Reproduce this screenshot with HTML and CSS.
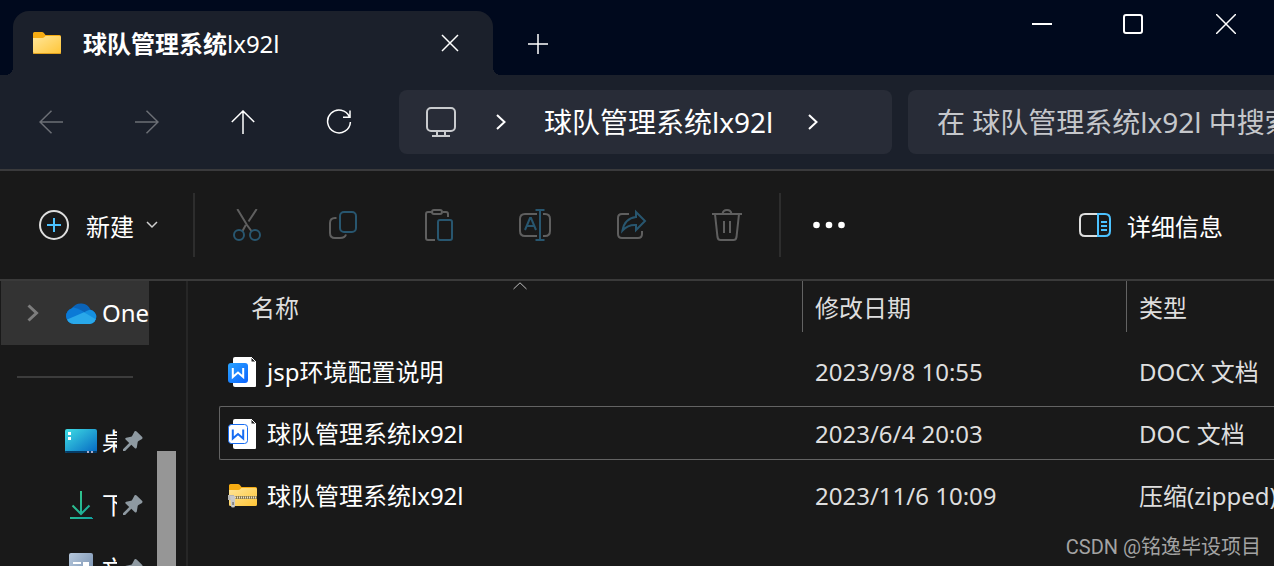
FILE: index.html
```html
<!DOCTYPE html>
<html lang="zh-CN">
<head>
<meta charset="utf-8">
<title>球队管理系统lx92l</title>
<link rel="stylesheet" href="styles.css">
</head>
<body>
<svg class="defs" width="0" height="0" aria-hidden="true">
  <defs>
    <linearGradient id="gFolder" x1="0" y1="0" x2="1" y2="1"><stop offset="0" stop-color="#ffe69a"/><stop offset="1" stop-color="#ffc536"/></linearGradient>
    <linearGradient id="gDesk" x1="0" y1="0" x2="1" y2="1"><stop offset="0" stop-color="#3fdde4"/><stop offset="1" stop-color="#0567c2"/></linearGradient>
    <linearGradient id="gDown" x1="0" y1="0" x2="1" y2="1"><stop offset="0" stop-color="#3ccf86"/><stop offset="1" stop-color="#11a3a0"/></linearGradient>
    <linearGradient id="gDoc" x1="0" y1="0" x2="1" y2="1"><stop offset="0" stop-color="#b6c8dc"/><stop offset="1" stop-color="#6c86a8"/></linearGradient>
    <linearGradient id="gWps" x1="0" y1="0" x2="1" y2="1"><stop offset="0" stop-color="#2ba4ff"/><stop offset="1" stop-color="#0a63ff"/></linearGradient>
    <clipPath id="cloud"><path d="M8.500 21A8 8 0 0 1 7 5.300 10.500 10.500 0 0 1 25.500 6.800 7.200 7.200 0 0 1 25 21z"/></clipPath>
    <symbol id="pin" viewBox="0 0 22 22"><path d="M12.500 1.400c.7-.6 1.500-.5 2.100.1l5.400 5.200c.7.7.7 1.600 0 2.200l-3.500 2.100c-.5.3-.7.6-.8 1.100l-.9 5.500c-.2 1-1.200 1.300-1.900.6l-3.600-3.500-6.200 6.200H1v-1.700l6.200-6.100-3.600-3.500c-.7-.7-.3-1.700.6-1.900l4.800-.9c.5-.1.9-.4 1.100-.9z" fill="#8e99a1"/></symbol>
  </defs>
</svg>
<div class="window">
  <header class="titlebar">
    <div class="tab">
      <svg width="28" height="22" viewBox="0 0 28 22" aria-hidden="true"><path d="M0 1.500Q0 0 1.500 0H9q1 0 1.700.8L12.500 3H26.500Q28 3 28 4.500V12H0z" fill="#f7ac12"/><path d="M0 6H9.500q1 0 1.700-.8L12.500 4H26.500Q28 4 28 5.500V20.500Q28 22 26.500 22H1.500Q0 22 0 20.500z" fill="url(#gFolder)"/><path d="M0 20.500Q0 22 1.500 22H26.500Q28 22 28 20.500v-.3q-.4.8-1.500.8H1.500Q.4 21 0 20.200z" fill="#e0a01e"/></svg>
      <span class="tab-title"><b>球队管理系统</b>lx92l</span>
      <button class="tab-close" aria-label="关闭标签页"><svg width="18" height="18" viewBox="0 0 18 18"><path d="M1 1l16 16M17 1L1 17" stroke="#fff" stroke-width="1.500" fill="none"/></svg></button>
    </div>
    <button class="tab-add" aria-label="新建标签页"><svg width="20" height="20" viewBox="0 0 20 20"><path d="M10 0v20M0 10h20" stroke="#fff" stroke-width="1.500"/></svg></button>
    <div class="controls">
      <button aria-label="最小化"><svg width="20" height="20" viewBox="0 0 20 20"><path d="M0 10h20" stroke="#fff" stroke-width="2"/></svg></button>
      <button aria-label="最大化"><svg width="20" height="20" viewBox="0 0 20 20"><rect x="1" y="1" width="18" height="18" rx="2" stroke="#fff" stroke-width="2" fill="none"/></svg></button>
      <button aria-label="关闭"><svg width="20" height="20" viewBox="0 0 20 20"><path d="M0 0l20 20M20 0L0 20" stroke="#fff" stroke-width="1.500"/></svg></button>
    </div>
  </header>

  <div class="navbar">
    <div class="history">
      <button aria-label="后退" disabled><svg width="24" height="24" viewBox="0 0 24 24" stroke="#6c6f76"><path d="M24 12H1M12.500.8L1 12l11.500 11.200"/></svg></button>
      <button aria-label="前进" disabled><svg width="24" height="24" viewBox="0 0 24 24" stroke="#6c6f76"><path d="M0 12h23M11.500.8L23 12 11.500 23.200"/></svg></button>
      <button aria-label="向上"><svg width="24" height="24" viewBox="0 0 24 24" stroke="#fff"><path d="M12 24V1M.8 12L12 1l11.200 11"/></svg></button>
      <button aria-label="刷新"><svg width="26" height="26" viewBox="0 0 26 26" stroke="#fff"><path d="M23.500 8A11.400 11.400 0 1 0 24.400 13M24 1.500V8.300H17"/></svg></button>
    </div>
    <nav class="address" aria-label="地址">
      <button class="pc" aria-label="此电脑"><svg width="30" height="30" viewBox="0 0 30 30" fill="none" stroke="#c9cbce" stroke-width="2"><rect x="1" y="1" width="28" height="23" rx="4"/><path d="M11 24v4M19 24v4M6 29h18"/></svg></button>
      <svg class="chev" width="10" height="16" viewBox="0 0 10 16"><path d="M1 1l7.500 7L1 15"/></svg>
      <button class="crumb">球队管理系统lx92l</button>
      <svg class="chev" width="10" height="16" viewBox="0 0 10 16"><path d="M1 1l7.500 7L1 15"/></svg>
    </nav>
    <input class="search" type="text" aria-label="搜索" placeholder="在 球队管理系统lx92l 中搜索">
  </div>

  <div class="toolbar">
    <button class="new"><svg width="30" height="30" viewBox="0 0 30 30" fill="none" stroke-width="2"><circle cx="15" cy="15" r="14" stroke="#dedede"/><path d="M15 8v14M8 15h14" stroke="#4cc2ff"/></svg><span>新建</span><svg width="12" height="8" viewBox="0 0 12 8" fill="none" stroke="#cfcfcf" stroke-width="1.500"><path d="M1 1l5 5 5-5"/></svg></button>
    <span class="rule"></span>
    <div class="tools">
      <button aria-label="剪切" disabled><svg viewBox="0 0 32 32"><path class="g" d="M6.300 0l9.700 16 4.800 6.500M25.700 0L17.500 12.500M14.800 16L11.200 22.500"/><g class="b"><circle cx="8" cy="26" r="5"/><circle cx="24" cy="26" r="5"/></g></svg></button>
      <button aria-label="复制" disabled><svg viewBox="0 0 32 32"><path class="g" d="M9.500 9H8Q3 9 3 14V24Q3 29 8 29H13Q18 29 19 25.500"/><rect class="b" x="13" y="3" width="16" height="20" rx="4"/></svg></button>
      <button aria-label="粘贴" disabled><svg viewBox="0 0 32 32"><path class="g" d="M12 31H5Q3 31 3 29V5Q3 3 5 3H9M20 3H23Q25 3 25 5V8"/><rect class="g" x="9" y="1" width="10" height="4" rx="2"/><rect class="b" x="15" y="11" width="14" height="20" rx="2"/></svg></button>
      <button aria-label="重命名" disabled><svg viewBox="0 0 32 32"><path class="g" d="M18 5H6Q1 5 1 10V22Q1 27 6 27H18M24 5H26Q31 5 31 10V22Q31 27 26 27H24"/><path class="b" d="M6 21l5-12h1l5 12M7.500 17h8M21 1V31M16.500 1H25.500M16.500 31H25.500"/></svg></button>
      <button aria-label="共享" disabled><svg viewBox="0 0 32 32"><path class="g" d="M14 5H7Q3 5 3 9V25Q3 29 7 29H23Q27 29 27 25V22"/><path class="b" d="M21 3l9 9-9 9V16Q13 15.500 7.500 21.500 9.500 9.500 21 8z"/></svg></button>
      <button aria-label="删除" disabled><svg viewBox="0 0 32 32"><path class="g" d="M1 5H31M11.500 5Q12 1 16 1T20.500 5M4 5L6.500 28Q7 31 9.500 31H22.500Q25 31 25.500 28L28 5M13 12V24M19 12V24"/></svg></button>
    </div>
    <span class="rule"></span>
    <button class="more" aria-label="查看更多"><svg width="32" height="8" viewBox="0 0 32 8" fill="#fff"><circle cx="3.500" cy="4" r="3.300"/><circle cx="16" cy="4" r="3.300"/><circle cx="28.500" cy="4" r="3.300"/></svg></button>
    <button class="details"><svg width="32" height="24" viewBox="0 0 32 24" fill="none" stroke-width="2"><path d="M19 1H6Q1 1 1 6V18Q1 23 6 23H19" stroke="#dedede"/><path d="M19 1H26Q31 1 31 6V18Q31 23 26 23H19zM22 9h6M22 13h6M22 17h6" stroke="#4cc2ff"/></svg><span>详细信息</span></button>
  </div>

  <div class="content">
    <aside class="sidebar">
      <ul class="tree">
        <li class="node selected">
          <svg class="expand" width="12" height="18" viewBox="0 0 12 18" fill="none" stroke="#7d7d7d" stroke-width="3"><path d="M1.500 1.500L9.500 9l-8 7.500"/></svg>
          <svg class="node-icon" width="32" height="21" viewBox="0 0 32 21"><g clip-path="url(#cloud)"><path d="M0 0H32V21H0z" fill="#0a63b8"/><path d="M0 4Q10 3 20 9.500L6 21H0z" fill="#0b7ad6"/><path d="M19 9.500Q24 5.500 32 6V21z" fill="#1590e0"/><path d="M0 17.500L19 9.300 32 17V21H0z" fill="#29a8ea"/></g></svg>
          <span class="node-name">OneDrive</span>
        </li>
        <li class="separator"></li>
        <li class="node">
          <svg class="node-icon" width="32" height="24" viewBox="0 0 32 24"><rect width="32" height="24" rx="2" fill="url(#gDesk)"/><path d="M0 22H32Q32 24 30 24H2Q0 24 0 22z" fill="#063c67"/><path d="M3 3h3v3H3zM3 8h3v3H3z" fill="#fff"/><path d="M22 22h2v2h-2zM26 22h2v2h-2z" fill="#aac"/></svg>
          <span class="node-name pinned">桌面</span><svg class="pin"><use href="#pin"/></svg>
        </li>
        <li class="node">
          <svg class="node-icon" width="32" height="28" viewBox="0 0 32 28" fill="none" stroke="url(#gDown)" stroke-width="2"><path d="M16 0V23M7.500 14.500L16 23l8.500-8.500M5 27H27V26.900"/></svg>
          <span class="node-name pinned">下载</span><svg class="pin"><use href="#pin"/></svg>
        </li>
        <li class="node">
          <svg class="node-icon" width="32" height="32" viewBox="0 0 32 32"><rect x="4" width="24" height="32" rx="2" fill="url(#gDoc)"/><path d="M8 9h8v2H8zM8 14h8v2H8zM18 9h6v7h-6zM8 19h16v2H8z" fill="#fff"/></svg>
          <span class="node-name pinned">文档</span><svg class="pin"><use href="#pin"/></svg>
        </li>
      </ul>
      <div class="scroll"><div class="thumb"></div></div>
    </aside>
    <main class="files">
      <table>
        <colgroup><col class="c-name"><col class="c-date"><col></colgroup>
        <thead>
          <tr>
            <th><div class="head">名称</div><svg class="sort" width="14" height="8" viewBox="0 0 14 8" fill="none" stroke="#bdbdbd"><path d="M.5 7L7 .8 13.500 7"/></svg></th>
            <th><div class="head divided">修改日期</div></th>
            <th><div class="head divided">类型</div></th>
          </tr>
        </thead>
        <tbody>
          <tr>
            <td><div class="file"><svg width="30" height="32" viewBox="0 0 30 32"><path d="M7 1H23L28 6V30Q28 31 27 31H7Q5 31 5 29V3Q5 1 7 1z" fill="#fff"/><path d="M23 1V6H28z" fill="#222" stroke="#fff"/><rect y="7" width="20" height="20" rx="3" fill="url(#gWps)"/><path d="M4.800 12V21L10 16.500 15.200 21V12" fill="none" stroke="#fff" stroke-width="2"/></svg><span>jsp环境配置说明</span></div></td>
            <td>2023/9/8 10:55</td>
            <td>DOCX 文档</td>
          </tr>
          <tr class="focused">
            <td><div class="file"><svg width="30" height="32" viewBox="0 0 30 32"><path d="M7 1H23L28 6V30Q28 31 27 31H7Q5 31 5 29V3Q5 1 7 1z" fill="#fff"/><path d="M23 1V6H28z" fill="#222" stroke="#fff"/><rect x=".5" y="6.500" width="19" height="19" rx="3" fill="#fff" stroke="#176cf2"/><path d="M4.800 11.500V20.500L10 16 15.200 20.500V11.500" fill="none" stroke="#176cf2" stroke-width="2"/></svg><span>球队管理系统lx92l</span></div></td>
            <td>2023/6/4 20:03</td>
            <td>DOC 文档</td>
          </tr>
          <tr>
            <td><div class="file"><svg width="30" height="24" viewBox="0 0 30 24"><path d="M1 1.500Q1 0 2.500 0H10q1 0 1.700.8L13.500 3H27.500Q29 3 29 4.500V12H1z" fill="#f7ac12"/><path d="M1 6H10.500q1 0 1.700-.8L13.500 4H27.500Q29 4 29 5.500V20.500Q29 22 27.500 22H2.500Q1 22 1 20.500z" fill="url(#gFolder)"/><path d="M7 13.500H29" stroke="#8d7a48" stroke-width="3"/><path d="M7 13.500H29" stroke="#e8e0c8" stroke-width="2" stroke-dasharray="1 1"/><path d="M0 11h6v5H0z" fill="#b5b5b5"/><path d="M2 12h5v10Q7 23.500 5 23.500T3 22z" fill="#c9c9c9"/><path d="M4.300 18h1.500v3H4.300z" fill="#777"/></svg><span>球队管理系统lx92l</span></div></td>
            <td>2023/11/6 10:09</td>
            <td>压缩(zipped)</td>
          </tr>
        </tbody>
      </table>
    </main>
  </div>
  <div class="watermark">CSDN @铭逸毕设项目</div>
</div>
</body>
</html>
```
FILE: styles.css
```css
* { box-sizing: border-box; }
body {
  margin: 0;
  background: #191919;
  color: #fff;
  font-family: "Noto Sans", "Noto Sans CJK SC", sans-serif;
  font-size: 24px;
  line-height: 32px;
}
button, input { font: inherit; color: inherit; background: none; border: 0; padding: 0; margin: 0; }
button { display: flex; align-items: center; justify-content: center; }
svg { display: block; flex: none; }
.defs { position: absolute; }

.window {
  position: relative;
  height: 100vh;
  display: flex;
  flex-direction: column;
  overflow: hidden;
  white-space: nowrap;
}

/* Title bar */
.titlebar { flex: none; display: flex; height: 75px; padding-left: 13px; background: #00091d; }
.tab {
  position: relative;
  display: flex;
  align-items: center;
  width: 480px;
  margin-top: 11px;
  padding: 0 34px 0 20px;
  background: #1b202b;
  border-radius: 16px 16px 0 0;
}
.tab::before, .tab::after { content: ""; position: absolute; bottom: 0; width: 8px; height: 8px; }
.tab::before { left: -8px; background: radial-gradient(circle at 0 0, transparent 8px, #1b202b 8px); }
.tab::after { right: -8px; background: radial-gradient(circle at 100% 0, transparent 8px, #1b202b 8px); }
.tab-title { flex: 1; margin-left: 22px; padding-top: 2px; }
.tab-add { width: 90px; padding-top: 13px; }
.controls { display: flex; height: 48px; margin-left: auto; }
.controls button { width: 92px; }
.controls button:last-child { width: 96px; }
.controls button:nth-child(2) { width: 90px; }

/* Navigation bar */
.navbar {
  flex: none;
  display: grid;
  grid-template-columns: 384px minmax(0, 505fr) minmax(0, 382fr);
  padding: 15px 0 15px 3px;
  background: #1b202b;
  border-bottom: 2px solid #3a3a3c;
}
.history { display: flex; }
.history button { width: 96px; }
.history svg { fill: none; stroke-width: 1.5; }
.address, .search { height: 64px; background: #282c37; border-radius: 8px; font-size: 28px; }
.address { display: flex; align-items: center; margin-left: 12px; padding-left: 27px; }
.chev { margin: 0 35px; fill: none; stroke: #fff; stroke-width: 2; }
.pc + .chev { margin: 0 38px 0 40px; }
.search { width: auto; margin-left: 16px; padding-left: 29px; border-radius: 8px 0 0 8px; outline: 0; appearance: none; }
.search::placeholder { color: #c5c7cb; opacity: 1; }

/* Command bar */
.toolbar { flex: none; display: flex; align-items: center; height: 110px; border-bottom: 2px solid #3a3a3a; padding: 0 51px 0 39px; }
.new { width: 154px; justify-content: flex-start; }
.new span { margin: 0 12px 0 17px; }
.new span, .details span { padding-top: 3px; }
.rule { width: 2px; height: 64px; background: #2d2d2d; }
.tools { display: flex; margin: 0 4px; }
.tools button { width: 96px; }
.tools svg { width: 32px; height: 32px; fill: none; stroke-width: 2; }
.g { stroke: #5f5f5f; }
.b { stroke: #28566f; }
.more { width: 96px; }
.details { gap: 16px; margin-left: auto; }

/* Content */
.content { flex: 1; min-height: 0; display: flex; }
.sidebar { flex: none; display: flex; width: 188px; border-right: 2px solid #262626; padding-left: 1px; }
.tree { width: 148px; margin: 0; padding: 0; list-style: none; overflow: hidden; }
.node { display: flex; align-items: center; height: 64px; padding-left: 64px; position: relative; }
.selected { background: #333; }
.expand { position: absolute; left: 26px; }
.node-name { margin-left: 5px; }
.pinned { width: 15px; overflow: hidden; }
.pin { width: 22px; height: 22px; margin-left: 5px; }
.separator { height: 2px; margin: 31px 16px; background: #3c3c3c; }
.scroll { width: 19px; margin-left: 8px; padding-top: 170px; }
.thumb { height: 100%; background: #969696; }

.files { flex: 1; min-width: 0; padding-left: 31px; overflow: hidden; }
table { width: 100%; margin-top: -8px; table-layout: fixed; border-collapse: separate; border-spacing: 0 8px; }
.c-name { width: 583px; }
.c-date { width: 324px; }
th { position: relative; height: 55px; padding: 0; vertical-align: top; text-align: left; font-weight: 400; color: #dedede; }
.head { height: 51px; padding: 11px 12px 0; }
th:first-child .head { padding-left: 32px; }
.divided { border-left: 1px solid #636363; }
.sort { position: absolute; top: 1px; left: 294px; }
td { height: 54px; padding: 2px 0 0 13px; color: #dedede; overflow: hidden; }
td:first-child { padding-left: 9px; color: #fff; }
.file { display: flex; align-items: center; gap: 9px; }
.focused td { border: solid #636363; border-width: 1px 0; }
.focused td:first-child { border-left-width: 1px; padding-left: 8px; border-radius: 2px 0 0 2px; }

.watermark { position: absolute; right: 13px; bottom: 3px; font-family: Roboto, "Noto Sans CJK SC", sans-serif; font-size: 20px; color: #a3a3a3; }
```
